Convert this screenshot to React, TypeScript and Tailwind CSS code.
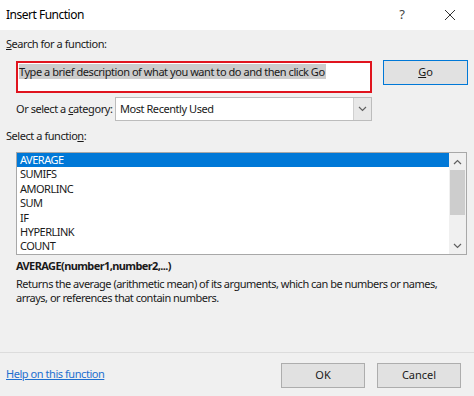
const functions = ["AVERAGE", "SUMIFS", "AMORLINC", "SUM", "IF", "HYPERLINK", "COUNT"];

function Chevron({ up }: { up?: boolean }) {
  return (
    <svg width="9" height="6" viewBox="0 0 9 6" className="block">
      <path
        d={up ? "M1 5 L4.5 1.5 L8 5" : "M1 1 L4.5 4.5 L8 1"}
        fill="none"
        stroke="#606060"
        strokeWidth="1.2"
      />
    </svg>
  );
}

export default function App() {
  return (
    <div
      className="w-[474px] h-[396px] bg-[#f0f0f0] text-[11px] text-[#1a1a1a] overflow-hidden flex flex-col"
      style={{ fontFamily: '"Noto Sans", "Open Sans", sans-serif' }}
    >
      {/* title bar */}
      <div className="h-[30px] bg-white flex items-center shrink-0">
        <span className="pl-[6px] text-[12px] tracking-[-0.5px] text-black">Insert Function</span>
        <span className="ml-auto mr-[39px] text-[13px] text-[#444]">?</span>
        <svg width="12" height="12" viewBox="0 0 12 12" className="mr-[18px]">
          <path d="M1 1 L11 11 M11 1 L1 11" stroke="#333" strokeWidth="1" />
        </svg>
      </div>

      <div className="flex-1 flex flex-col px-[6px]">
        <div className="mt-[6px] leading-[16px] tracking-[-0.45px]">
          <span className="underline">S</span>earch for a function:
        </div>

        <div className="flex items-start mt-[8px] pl-[10px]">
          <div className="w-[356px] h-[32px] mt-[1px] border-2 border-[#e0141e] bg-white pl-[1px] pt-[1px]">
            <span className="bg-[#cccccc] leading-[15px] inline-block pr-[1px] tracking-[-0.45px]">
              Type a brief description of what you want to do and then click Go
            </span>
          </div>
          <button className="ml-[11px] w-[85px] h-[25px] border border-[#0078d7] bg-[#e1e1e1] flex items-center justify-center">
            <span className="underline">G</span>o
          </button>
        </div>

        <div className="flex items-center mt-[4px] pl-[10px]">
          <span className="w-[99px] shrink-0 whitespace-nowrap tracking-[-0.45px]">
            Or select a <span className="underline">c</span>ategory:
          </span>
          <div className="w-[257px] h-[24px] border border-[#bcbcbc] bg-white flex items-center">
            <span className="pl-[4px] tracking-[-0.45px]">Most Recently Used</span>
            <div className="ml-auto w-[18px] h-full bg-[#e8e8e8] border-l border-[#d0d0d0] flex items-center justify-center">
              <Chevron />
            </div>
          </div>
        </div>

        <div className="mt-[7px] leading-[16px] tracking-[-0.45px]">
          Select a functio<span className="underline">n</span>:
        </div>

        <div className="ml-[10px] mt-[8px] w-[451px] h-[103px] border border-[#a8a8a8] bg-white flex">
          <div className="flex-1 flex flex-col tracking-[-0.5px]">
            {functions.map((f, i) => (
              <div
                key={f}
                className={
                  i === 0
                    ? "h-[14.4px] leading-[14.4px] pl-[3px] bg-[#0078d7] text-white"
                    : "h-[14.4px] leading-[14.4px] pl-[3px]"
                }
              >
                {f}
              </div>
            ))}
          </div>
          <div className="w-[17px] bg-[#f0f0f0] flex flex-col items-center">
            <div className="h-[17px] flex items-center justify-center">
              <Chevron up />
            </div>
            <div className="w-[15px] h-[45px] bg-[#cdcdcd]" />
            <div className="mt-auto h-[17px] flex items-center justify-center">
              <Chevron />
            </div>
          </div>
        </div>

        <div className="pl-[10px] mt-[4px] font-bold leading-[14px] tracking-[-0.6px]">
          AVERAGE(number1,number2,...)
        </div>
        <div className="pl-[10px] mt-[4px] leading-[14px] tracking-[-0.5px]">
          Returns the average (arithmetic mean) of its arguments, which can be numbers or names,
          <br />
          arrays, or references that contain numbers.
        </div>

        <div className="mt-auto border-t border-[#dcdcdc] mx-[-6px] px-[6px] h-[44px] flex items-center">
          <a className="text-[#1e6fcf] underline cursor-pointer tracking-[-0.45px]">Help on this function</a>
          <button className="ml-auto mt-[2px] w-[84px] h-[25px] border border-[#adadad] bg-[#e1e1e1]">OK</button>
          <button className="ml-[12px] mt-[2px] mr-[7px] w-[84px] h-[25px] border border-[#adadad] bg-[#e1e1e1]">
            Cancel
          </button>
        </div>
      </div>
    </div>
  );
}
